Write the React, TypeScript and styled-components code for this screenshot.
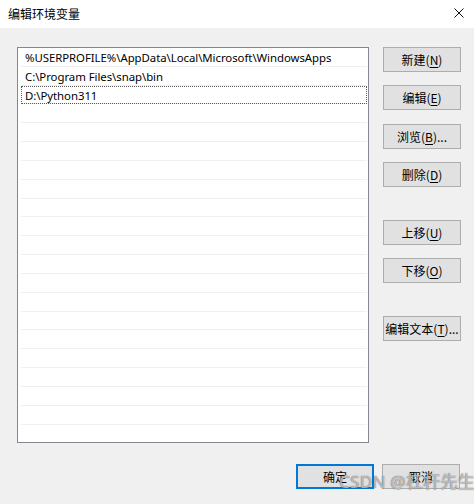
import React from 'react';
import styled, { createGlobalStyle } from 'styled-components';

const GlobalStyle = createGlobalStyle`
  html, body {
    margin: 0;
    padding: 0;
    background: #f0f0f0;
  }
  body {
    font-family: "Noto Sans", "Noto Sans CJK SC", sans-serif;
    font-size: 12px;
    color: #000;
  }
`;

const Window = styled.div`
  position: relative;
  width: 474px;
  height: 504px;
  background: #f0f0f0;
  display: flex;
  flex-direction: column;
  overflow: hidden;
`;

const TitleBar = styled.div`
  height: 28px;
  flex-shrink: 0;
  background: #fff;
  display: flex;
  align-items: center;
  justify-content: space-between;
  padding: 0 10px 0 8px;
`;

const Title = styled.div`
  font-family: "Noto Sans CJK SC", sans-serif;
  font-size: 12px;
  line-height: 1;
  margin-top: -1px;
`;

const CloseButton = styled.div`
  width: 10px;
  height: 10px;
  display: flex;
  margin-top: -2px;
`;

const Content = styled.div`
  display: flex;
  padding: 19px 13px 0 17px;
  gap: 14px;
`;

const List = styled.div`
  width: 352px;
  height: 396px;
  box-sizing: border-box;
  border: 1px solid #828790;
  background: #fff;
  padding: 0 1px 0 3px;
  overflow: hidden;
`;

const Row = styled.div<{ $focused?: boolean }>`
  height: 18.83px;
  box-sizing: border-box;
  display: flex;
  align-items: center;
  padding-left: 4px;
  padding-top: 1px;
  border-bottom: 1px solid #f0f0f0;
  outline: ${p => (p.$focused ? '1px dotted #5a5a5a' : 'none')};
  outline-offset: -1px;
  white-space: nowrap;
  font-family: "Noto Sans", sans-serif;
  font-size: 11.4px;
  letter-spacing: -0.05px;
  color: #000;
`;

const ButtonColumn = styled.div`
  width: 78px;
  display: flex;
  flex-direction: column;
  gap: 13.33px;
`;

const Button = styled.div<{ $spaced?: boolean; $primary?: boolean }>`
  width: 78px;
  height: 25px;
  box-sizing: border-box;
  flex-shrink: 0;
  display: flex;
  align-items: center;
  justify-content: center;
  background: #e1e1e1;
  border: ${p => (p.$primary ? '2px solid #0078d7' : '1px solid #adadad')};
  margin-top: ${p => (p.$spaced ? '19.5px' : '0')};
  font-family: "Noto Sans CJK SC", sans-serif;
  font-size: 12px;
  color: #000;
  white-space: nowrap;
`;

const Key = styled.span`
  text-decoration: underline;
  text-underline-offset: 2px;
`;

const Footer = styled.div`
  display: flex;
  justify-content: flex-end;
  gap: 8px;
  padding: 21px 14px 0 0;
`;

const Watermark = styled.div`
  position: absolute;
  left: 339px;
  top: 473px;
  font-family: "Noto Sans", "Noto Sans CJK SC", sans-serif;
  font-size: 17px;
  line-height: 1;
  letter-spacing: 0.3px;
  color: rgba(250, 250, 250, 0.6);
  text-shadow: 0 0 1px rgba(70, 70, 70, 0.8), 0 0 1px rgba(70, 70, 70, 0.5);
  white-space: nowrap;
  pointer-events: none;
`;

const paths = [
  '%USERPROFILE%\\AppData\\Local\\Microsoft\\WindowsApps',
  'C:\\Program Files\\snap\\bin',
  'D:\\Python311',
];

const ROW_COUNT = 21;

const buttons: { label: string; key: string; suffix?: string; spaced?: boolean }[] = [
  { label: '新建', key: 'N' },
  { label: '编辑', key: 'E' },
  { label: '浏览', key: 'B', suffix: '...' },
  { label: '删除', key: 'D' },
  { label: '上移', key: 'U', spaced: true },
  { label: '下移', key: 'O' },
  { label: '编辑文本', key: 'T', suffix: '...', spaced: true },
];

export default function App() {
  const rows = Array.from({ length: ROW_COUNT }, (_, i) => paths[i] ?? '');

  return (
    <Window>
      <GlobalStyle />
      <TitleBar>
        <Title>编辑环境变量</Title>
        <CloseButton>
          <svg width="10" height="10" viewBox="0 0 10 10">
            <path d="M0.5 0.5L9.5 9.5M9.5 0.5L0.5 9.5" stroke="#111" strokeWidth="1" />
          </svg>
        </CloseButton>
      </TitleBar>

      <Content>
        <List>
          {rows.map((text, i) => (
            <Row key={i} $focused={i === 2}>
              {text}
            </Row>
          ))}
        </List>
        <ButtonColumn>
          {buttons.map(b => (
            <Button key={b.key} $spaced={b.spaced}>
              {b.label}(<Key>{b.key}</Key>){b.suffix}
            </Button>
          ))}
        </ButtonColumn>
      </Content>

      <Footer>
        <Button $primary>确定</Button>
        <Button>取消</Button>
      </Footer>

      <Watermark>CSDN @杠杆先生</Watermark>
    </Window>
  );
}
